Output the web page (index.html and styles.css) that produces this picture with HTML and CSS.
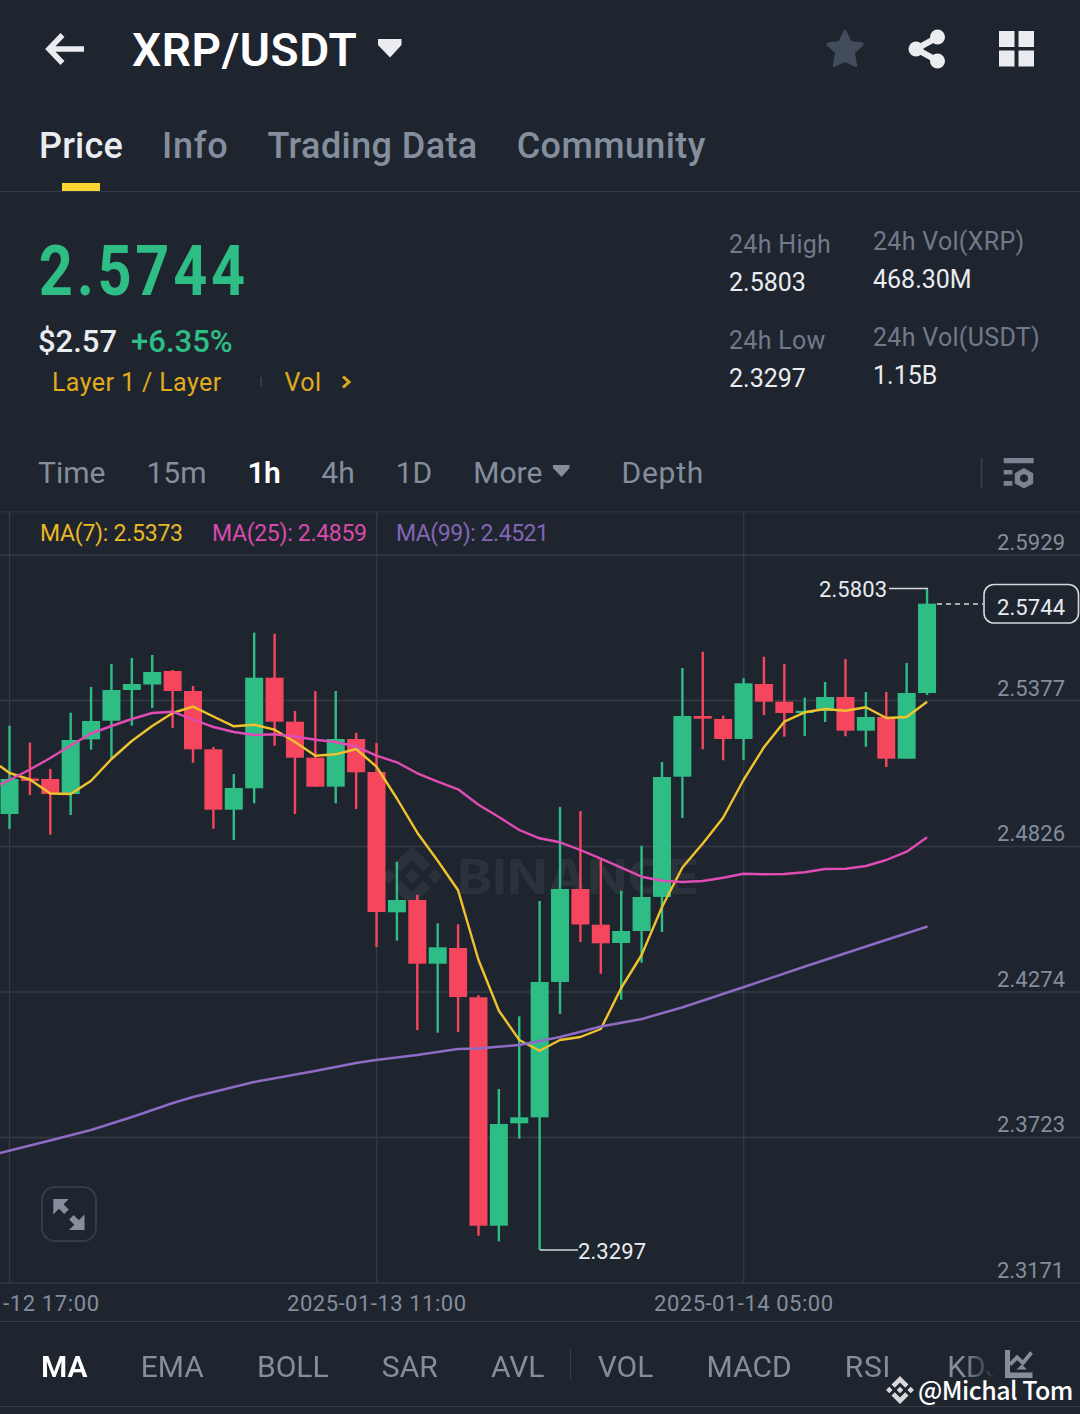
FILE: index.html
```html
<!DOCTYPE html>
<html lang="en">
<head>
    <meta charset="UTF-8">
    <meta name="viewport" content="width=device-width, initial-scale=1.0">
    <title>XRP/USDT</title>
    <link rel="stylesheet" href="styles.css">
</head>
<body>
    <div class="app">
        <header class="header">
            <svg class="back" width="40" height="34" viewBox="0 0 40 34">
                <path d="M39 17H5M17.500 3L4 17l13.500 14" fill="none" stroke="#eaecef" stroke-width="5.500"/>
            </svg>
            <h1>XRP/USDT</h1>
            <svg class="caret" width="24" height="19" viewBox="0 0 24 19">
                <path d="M0 0h23.500v6L12 18.500 0 6z" fill="#eaecef"/>
            </svg>
            <div class="actions">
                <svg width="40" height="40" viewBox="0 0 40 40">
                    <path d="M20 2.500l5.200 11 12 1.600-8.800 8.400 2.300 13L20 31.500 9.300 36.500l2.300-13-8.800-8.400 12-1.600z" fill="#434c5a" stroke="#434c5a" stroke-width="3" stroke-linejoin="round"/>
                </svg>
                <svg width="38" height="40" viewBox="0 0 38 40">
                    <path d="M30 8L8 20l22 12" fill="none" stroke="#eaecef" stroke-width="6"/>
                    <circle cx="8" cy="20" r="7.500" fill="#eaecef"/>
                    <circle cx="29.500" cy="8" r="7.500" fill="#eaecef"/>
                    <circle cx="29.500" cy="32" r="7.500" fill="#eaecef"/>
                </svg>
                <svg width="36" height="36" viewBox="0 0 36 36">
                    <path d="M0 0h15.500v16H0zM19.500 0H35v16H19.500zM0 19.500h15.500v16H0zM19.500 19.500H35v16H19.500z" fill="#eaecef"/>
                </svg>
            </div>
        </header>

        <nav class="tabs">
            <a class="tab active">Price</a>
            <a class="tab info">Info</a>
            <a class="tab">Trading Data</a>
            <a class="tab">Community</a>
        </nav>

        <section class="ticker">
            <div class="quote">
                <div class="last-price">2.5744</div>
                <div class="change">
                    <span class="fiat">$2.57</span>
                    <span class="percent">+6.35%</span>
                </div>
                <div class="tags">
                    <span>Layer 1 / Layer</span>
                    <i class="tag-line"></i>
                    <span class="vol">Vol</span>
                    <svg width="11" height="14" viewBox="0 0 11 14">
                        <path d="M2 1.500L8 7l-6 5.500" fill="none" stroke="#e0ab1c" stroke-width="3"/>
                    </svg>
                </div>
            </div>
            <div class="stats stats-price">
                <span class="label">24h High</span>
                <span class="value">2.5803</span>
                <span class="label">24h Low</span>
                <span class="value">2.3297</span>
            </div>
            <div class="stats stats-vol">
                <span class="label">24h Vol(XRP)</span>
                <span class="value">468.30M</span>
                <span class="label">24h Vol(USDT)</span>
                <span class="value">1.15B</span>
            </div>
        </section>

        <nav class="intervals">
            <a>Time</a>
            <a>15m</a>
            <a class="active">1h</a>
            <a>4h</a>
            <a>1D</a>
            <a class="more">More
                <svg width="17" height="12" viewBox="0 0 17 12"><path d="M0 0h16.500v3L8.500 12 0 3z" fill="#848e9c"/></svg>
            </a>
            <a class="depth">Depth</a>
            <svg class="settings" width="54" height="32" viewBox="0 0 54 32">
                <path d="M1.500 1v30" stroke="#343c47" stroke-width="2"/>
                <path d="M23.700 1h30v5.200h-30zM23.700 13h8.700v4.500h-8.700zM23.700 24h8.700v4.800h-8.700z" fill="#7b8492"/>
                <path fill-rule="evenodd" d="M44 11l9.200 5.200v10.200L44 31.500l-9.200-5.100V16.200zM44 17.200a4 4 0 1 0 .01 0z" fill="#7b8492"/>
            </svg>
        </nav>

        <svg id="chart" class="chart" width="1080" height="810" viewBox="0 511 1080 810">
            <g class="grid">
                <path class="edge" d="M0 511.500H1080M0 1283H1080"/>
                <path d="M0 555H1080M0 700.500H1080M0 846.500H1080M0 992H1080M0 1137.500H1080"/>
                <path d="M9.500 512V1283M376.700 512V1283M743.700 512V1283"/>
            </g>
            <g class="brand">
                <path transform="translate(382 846) scale(2.150)" d="M14 0l8.500 8.500-3.300 3.300L14 6.600l-5.200 5.200-3.300-3.300zM14 28l8.500-8.500-3.300-3.300-5.200 5.200-5.200-5.200-3.300 3.300zM14 10.700l3.300 3.300-3.300 3.300-3.300-3.300zM0 14l3.300-3.300L6.600 14l-3.300 3.300zM21.400 14l3.300-3.300L28 14l-3.300 3.300z"/>
                <text x="457" y="894" textLength="242" lengthAdjust="spacingAndGlyphs">BINANCE</text>
            </g>
            <g id="candles"></g>
            <g id="averages"></g>
            <g class="legend">
                <text x="40" y="541" textLength="143" fill="#e8b923">MA(7): 2.5373</text>
                <text x="212" y="541" textLength="155" fill="#d94bab">MA(25): 2.4859</text>
                <text x="396" y="541" textLength="153" fill="#8465b5">MA(99): 2.4521</text>
            </g>
            <g class="axis">
                <text x="997" y="550" textLength="68">2.5929</text>
                <text x="997" y="696" textLength="68">2.5377</text>
                <text x="997" y="841" textLength="68">2.4826</text>
                <text x="997" y="987" textLength="68">2.4274</text>
                <text x="997" y="1132" textLength="68">2.3723</text>
                <text x="997" y="1278" textLength="67">2.3171</text>
                <text x="3" y="1311" textLength="96">-12 17:00</text>
                <text x="287" y="1311" textLength="179">2025-01-13 11:00</text>
                <text x="654" y="1311" textLength="179">2025-01-14 05:00</text>
            </g>
            <g class="marks">
                <path d="M889 588.500H928M540 1250H578"/>
                <path d="M937 604H983" stroke-dasharray="5 4"/>
                <rect x="984" y="584.500" width="94.500" height="38.500" rx="10"/>
                <text x="819" y="597" textLength="68">2.5803</text>
                <text x="997" y="615" textLength="68">2.5744</text>
                <text x="578" y="1259" textLength="68">2.3297</text>
            </g>
            <g class="expand">
                <rect x="42" y="1187" width="54" height="54" rx="13"/>
                <path d="M53.300 1199h15.500l-5.300 5.300 5.200 5.200-4.500 4.500-5.200-5.200-5.700 5.700zM84.500 1230H69l5.300-5.300-5.200-5.200 4.500-4.500 5.200 5.200 5.700-5.700z"/>
            </g>
        </svg>

        <nav class="indicators">
            <div class="indicator-list">
                <a class="active">MA</a>
                <a>EMA</a>
                <a>BOLL</a>
                <a>SAR</a>
                <a class="last-main">AVL</a>
                <a>VOL</a>
                <a>MACD</a>
                <a class="rsi">RSI</a>
                <a>KDJ</a>
            </div>
            <svg class="chart-icon" width="28" height="28" viewBox="0 0 28 28">
                <path d="M0 0h5v22.500h22.500V28H0z" fill="#848e9c"/>
                <path d="M5 14.500l7-7 6 5.500L26.500 2.500" fill="none" stroke="#848e9c" stroke-width="3.800"/>
                <path d="M11.500 19.500l5.200-5 5.300 5z" fill="#848e9c"/>
            </svg>
        </nav>

        <div class="author">
            <svg width="28" height="28" viewBox="0 0 28 28">
                <path d="M14 0l8.500 8.500-3.300 3.300L14 6.600l-5.200 5.200-3.300-3.300zM14 28l8.500-8.500-3.300-3.300-5.200 5.200-5.200-5.200-3.300 3.300zM14 10.700l3.300 3.300-3.300 3.300-3.300-3.300zM0 14l3.300-3.300L6.600 14l-3.300 3.300zM21.400 14l3.300-3.300L28 14l-3.300 3.300z" fill="#d9d9d9"/>
            </svg>
            <span>@Michal Tom</span>
        </div>
    </div>

    <script src="chart.js"></script>
</body>
</html>
```
FILE: styles.css
```css
* {
    margin: 0;
    padding: 0;
    box-sizing: border-box;
}

body {
    width: 1080px;
    height: 1414px;
    overflow: hidden;
    background: #1f252f;
    color: #eaecef;
    font-family: Roboto, "Liberation Sans", sans-serif;
}

svg {
    display: block;
    flex: none;
}

.app {
    position: relative;
    height: 1414px;
}

.header {
    display: flex;
    align-items: center;
    height: 97px;
    padding: 0 45px;
}

.header h1 {
    margin: 3px 0 0 47px;
    font-size: 46px;
    font-weight: 600;
    line-height: 60px;
    letter-spacing: 0.6px;
    color: #fff;
}

.caret {
    margin-left: 21px;
}

.actions {
    display: flex;
    align-items: center;
    margin-left: auto;
}

.actions svg + svg {
    margin-left: 43px;
}

.actions svg:last-child {
    margin-left: 53px;
}

.tabs {
    display: flex;
    gap: 39px;
    height: 95px;
    padding-left: 39px;
    border-bottom: 1px solid #343c47;
}

.tab {
    position: relative;
    height: 94px;
    font-size: 36px;
    font-weight: 500;
    line-height: 98px;
    letter-spacing: 0.4px;
    color: #848e9c;
}

.tab.active {
    letter-spacing: 0.2px;
    color: #eaecef;
}

.tab.info {
    letter-spacing: 0.8px;
}

.tab.active::after {
    content: "";
    position: absolute;
    left: 50%;
    bottom: 0;
    width: 38px;
    height: 8px;
    margin-left: -19px;
    background: #fcd535;
}

.ticker {
    display: flex;
    height: 242px;
}

.quote {
    width: 729px;
    padding: 39px 0 0 38px;
}

/* narrow numerals with wide spacing */
.last-price {
    height: 80px;
    padding-left: 1px;
    font-size: 70px;
    font-weight: 700;
    line-height: 80px;
    letter-spacing: 4.3px;
    color: #2ebd85;
    transform: scaleX(0.85);
    transform-origin: 0 50%;
}

.change {
    display: flex;
    gap: 14px;
    height: 60px;
    padding-top: 1px;
    font-size: 31px;
    font-weight: 500;
    line-height: 60px;
}

.percent {
    color: #2ebd85;
}

.tags {
    display: flex;
    align-items: center;
    height: 22px;
    padding-left: 14px;
    font-size: 25px;
    letter-spacing: 0.4px;
    color: #e0ab1c;
}

.tag-line {
    width: 2px;
    height: 10px;
    margin: 0 23px 0 38px;
    background: #343c47;
}

.vol {
    margin-right: 20px;
}

.stats {
    display: flex;
    flex-direction: column;
    font-size: 25px;
    line-height: 38px;
    letter-spacing: 0.3px;
    white-space: nowrap;
}

.stats-price {
    width: 144px;
    padding-top: 34px;
}

.stats-vol {
    padding-top: 31px;
}

.stats .label {
    color: #707a8a;
}

.stats .value {
    margin-bottom: 20px;
    letter-spacing: 0;
}

.intervals {
    display: flex;
    align-items: center;
    gap: 41px;
    height: 77px;
    padding: 0 46px 0 38px;
    font-size: 30px;
    color: #848e9c;
}

.intervals .active {
    font-weight: 600;
    letter-spacing: -0.5px;
    color: #fff;
}

.more {
    display: flex;
    align-items: center;
    gap: 11px;
}

.more svg {
    margin-bottom: 4px;
}

.intervals .depth {
    margin-left: 10px;
    letter-spacing: 0.8px;
}

.settings {
    margin-left: auto;
}

.chart {
    font-size: 22px;
}

.grid path {
    fill: none;
    stroke: #343b46;
    stroke-width: 1.300;
}

.grid .edge {
    stroke: #2b323c;
    stroke-width: 2;
}

.brand {
    fill: #2c323c;
    font: 700 48px Inter, sans-serif;
}

.legend {
    font-size: 23px;
}

.axis {
    fill: #848e9c;
}

.up {
    fill: #2ebd85;
}

.down {
    fill: #f6465d;
}

.average {
    fill: none;
    stroke-width: 2.400;
    stroke-linejoin: round;
}

.marks path,
.marks rect {
    fill: none;
    stroke: #d5d8dc;
    stroke-width: 1.600;
}

.marks text {
    fill: #eaecef;
}

.expand rect {
    fill: none;
    stroke: #343c47;
    stroke-width: 2;
}

.expand path {
    fill: #848e9c;
}

.indicators {
    display: flex;
    align-items: center;
    height: 86px;
    padding-left: 41px;
    border-top: 1px solid #343c47;
    border-bottom: 1px solid #343c47;
}

.indicator-list {
    display: flex;
    align-items: center;
    gap: 53.200px;
    width: 957px;
    height: 60px;
    padding-top: 4px;
    overflow: hidden;
    font-size: 30px;
    color: #848e9c;
    -webkit-mask-image: linear-gradient(90deg, #000 922px, transparent 955px);
    mask-image: linear-gradient(90deg, #000 922px, transparent 955px);
}

.indicator-list .active {
    font-weight: 600;
    color: #fff;
}

.last-main {
    position: relative;
}

.last-main::after {
    content: "";
    position: absolute;
    right: -27px;
    top: 0;
    width: 1px;
    height: 31px;
    background: #343c47;
}

.rsi {
    margin-right: 3px;
    letter-spacing: 0.6px;
}

.chart-icon {
    margin: 0 0 0 7px;
}

/* sits over the indicator bar */
.author {
    position: absolute;
    left: 886px;
    top: 1372px;
    display: flex;
    align-items: center;
    gap: 4px;
    height: 36px;
    font: 500 25px/36px "Noto Sans CJK SC", sans-serif;
    letter-spacing: -0.5px;
    color: #fff;
    white-space: nowrap;
}

.author span {
    margin-top: -2px;
}
```
FILE: chart.js
```javascript
(function() {
    'use strict';

    var START_X = 9.5;
    var STEP = 20.39;
    var BODY_WIDTH = 18;
    var WICK_WIDTH = 2.4;

    // [high, body top, body bottom, low, direction]
    var candles = [
        [725.7, 779, 814, 829, 'up'],
        [742.7, 778.5, 781, 795, 'down'],
        [769, 779, 794, 834.7, 'down'],
        [712.7, 740, 794, 815, 'up'],
        [687, 721, 739.3, 749.7, 'up'],
        [664, 690, 720.7, 759, 'up'],
        [658, 684, 690, 725.7, 'up'],
        [655, 672, 684.5, 708, 'up'],
        [670, 671, 691, 728, 'down'],
        [686, 691, 749.3, 762.7, 'down'],
        [747, 749.3, 809.7, 828.7, 'down'],
        [774, 788, 809.7, 840, 'up'],
        [632.7, 677.7, 788.3, 803.3, 'up'],
        [633.7, 677.7, 721.7, 745.7, 'down'],
        [711, 721.7, 757.7, 814, 'down'],
        [691, 757.7, 786.7, 786.7, 'down'],
        [691, 739, 786.7, 803.3, 'up'],
        [732.7, 739, 772.3, 809, 'down'],
        [743, 772, 912, 947, 'down'],
        [861.7, 900, 912.3, 940.7, 'up'],
        [894.7, 900, 963.7, 1030, 'down'],
        [923.3, 947.3, 963.7, 1032.7, 'up'],
        [924.3, 948, 997, 1032, 'down'],
        [995.3, 997.3, 1225.7, 1235.7, 'down'],
        [1089, 1124, 1225.7, 1241.3, 'up'],
        [1016.3, 1117.3, 1123.3, 1138.7, 'up'],
        [901, 982, 1117.3, 1250, 'up'],
        [807, 889, 982, 1014, 'up'],
        [811, 889, 924.5, 942, 'down'],
        [859.3, 924.7, 943.3, 973.7, 'down'],
        [890.7, 931, 943, 999.7, 'up'],
        [845.7, 897, 931, 962.7, 'up'],
        [762, 777, 896.9, 932, 'up'],
        [668, 716, 776.7, 818, 'up'],
        [651.7, 716, 718.7, 749.3, 'down'],
        [715.7, 719, 739, 760.3, 'down'],
        [678.3, 683.3, 739, 760, 'up'],
        [656.7, 684, 701.7, 715, 'down'],
        [664, 701.7, 713, 736.7, 'down'],
        [697.7, 710.8, 713, 736, 'up'],
        [682, 697, 711, 722, 'up'],
        [659, 697, 730.7, 736.3, 'down'],
        [692, 717, 730.7, 746.7, 'up'],
        [692, 717, 758.7, 767, 'down'],
        [663, 693, 758.7, 758.7, 'up'],
        [588, 603.7, 693, 695, 'up']
    ];

    var ma7 = [773, 779.5, 793.5, 794, 780.7, 759, 741, 726, 713, 706.7, 716.5, 726.3, 724.7, 729.7, 742, 755.7,
        754.3, 749, 766.7, 798.5, 832.7, 860.7, 890.3, 960, 1010.7, 1040, 1050.7, 1040, 1037, 1029, 988, 955,
        907, 867.5, 843.5, 817.7, 780, 747.3, 721.7, 712.3, 709, 710.7, 707.3, 718, 717, 701.7];

    var ma25 = [780, 769.5, 758, 745.5, 733.5, 726, 719, 713, 711.7, 719.5, 727, 732, 735, 734.3, 736.5, 739.7,
        742, 746.5, 755.7, 762.3, 773.3, 781.7, 789.3, 804.7, 817, 830, 838.3, 842.3, 850, 858.7, 867.7, 876.7,
        880.7, 882, 881, 877.7, 873.7, 874.3, 874, 872.3, 869, 868.7, 866, 860, 851.7, 837.3];

    // the long average is sampled at its own points
    var ma99 = '0,1153 50,1140.5 91,1130 132,1117 173,1103 193,1097 254,1082 315,1071 356,1063 376,1060 417,1055 ' +
        '458,1049 478,1048.5 519,1045 540,1041 560,1037 601,1026.5 642,1019 682,1007.5 744,987 805,966.5 866,946.5 927.5,926.5';

    function add(parent, name, attrs) {
        var el = document.createElementNS('http://www.w3.org/2000/svg', name);
        for (var key in attrs) {
            el.setAttribute(key, attrs[key]);
        }
        parent.appendChild(el);
    }

    function toPoints(first, values) {
        return first + ' ' + values.map(function(y, i) {
            return (START_X + i * STEP).toFixed(1) + ',' + y;
        }).join(' ');
    }

    var candleGroup = document.getElementById('candles');
    candles.forEach(function(c, i) {
        var x = START_X + i * STEP;
        add(candleGroup, 'rect', { 'class': c[4], x: x - WICK_WIDTH / 2, y: c[0], width: WICK_WIDTH, height: c[3] - c[0] });
        add(candleGroup, 'rect', { 'class': c[4], x: x - BODY_WIDTH / 2, y: c[1], width: BODY_WIDTH, height: c[2] - c[1] });
    });

    var lineGroup = document.getElementById('averages');
    add(lineGroup, 'polyline', { 'class': 'average', stroke: '#f0c22d', points: toPoints('0,766', ma7) });
    add(lineGroup, 'polyline', { 'class': 'average', stroke: '#e04cb4', points: toPoints('0,784.5', ma25) });
    add(lineGroup, 'polyline', { 'class': 'average', stroke: '#8e6bc4', points: ma99 });
})();
```
